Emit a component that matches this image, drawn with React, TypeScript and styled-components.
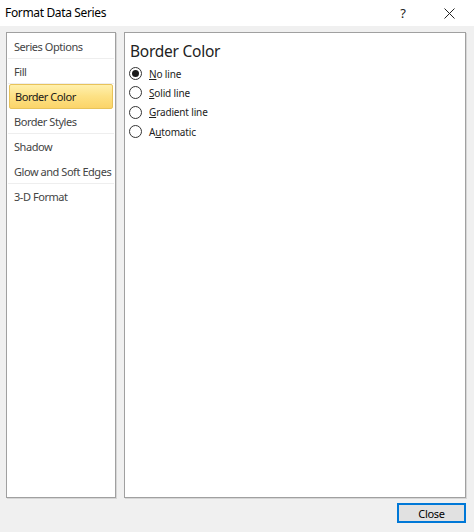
import React from "react";
import styled, { createGlobalStyle } from "styled-components";

const Global = createGlobalStyle`
  html, body { margin: 0; padding: 0; background: #f0f0f0; }
  body { font-family: "Noto Sans", "Open Sans", sans-serif; color: #000; }
`;

const Dialog = styled.div`
  width: 474px;
  height: 532px;
  display: flex;
  flex-direction: column;
  background: #f0f0f0;
  overflow: hidden;
`;

const TitleBar = styled.div`
  height: 26px;
  flex: 0 0 26px;
  background: #ffffff;
  display: flex;
  align-items: center;
  padding-left: 5px;
  box-sizing: border-box;
`;

const Title = styled.div`
  flex: 1;
  font-size: 12px;
  letter-spacing: -0.35px;
  color: #000;
  padding-bottom: 1px;
`;

const TitleButton = styled.div<{ $w: number }>`
  width: ${(p) => p.$w}px;
  height: 26px;
  display: flex;
  align-items: center;
  justify-content: center;
  font-size: 13px;
  color: #222;
`;

const Body = styled.div`
  flex: 1;
  display: flex;
  gap: 8px;
  padding: 6px 8px 0 6px;
  min-height: 0;
`;

const Panel = styled.div<{ $w?: number }>`
  ${(p) => (p.$w ? `width: ${p.$w}px; flex: 0 0 ${p.$w}px;` : "flex: 1;")}
  height: 466px;
  box-sizing: border-box;
  background: #fff;
  border: 1px solid #a0a0a0;
  box-shadow: 1px 1px 0 #d6d6d6;
`;

const Nav = styled(Panel)`
  padding: 1px 1px;
  display: flex;
  flex-direction: column;
`;

const NavItem = styled.div<{ $active?: boolean; $line?: boolean }>`
  height: 25px;
  box-sizing: border-box;
  display: flex;
  align-items: center;
  padding-left: 6px;
  font-size: 11px;
  letter-spacing: -0.45px;
  white-space: nowrap;
  color: ${(p) => (p.$active ? "#1a1a1a" : "#444")};
  border-bottom: 1px solid ${(p) => (p.$line && !p.$active ? "#eeeeee" : "transparent")};
  ${(p) =>
    p.$active &&
    `
    background: linear-gradient(#fff0ad, #fde184 50%, #fbd469);
    border: 1px solid #e8c35a;
    border-radius: 2px;
    padding-left: 5px;
    margin: 0 1px;
  `}
`;

const Content = styled(Panel)`
  padding: 8px 4px;
`;

const Heading = styled.div`
  font-size: 15.5px;
  letter-spacing: -0.25px;
  line-height: 20px;
  padding-left: 1px;
  color: #222;
  margin-bottom: 6px;
`;

const Options = styled.div`
  display: flex;
  flex-direction: column;
  gap: 6.2px;
`;

const Option = styled.label`
  display: flex;
  align-items: center;
  gap: 7px;
  height: 13.2px;
  font-size: 10px;
  letter-spacing: -0.15px;
  color: #222;
`;

const Circle = styled.span<{ $on?: boolean }>`
  width: 13px;
  height: 13px;
  flex: 0 0 13px;
  box-sizing: border-box;
  border-radius: 50%;
  border: 1px solid #333;
  background: #fff;
  display: flex;
  align-items: center;
  justify-content: center;
  &::after {
    content: "";
    width: 7px;
    height: 7px;
    border-radius: 50%;
    background: ${(p) => (p.$on ? "#1a1a1a" : "transparent")};
  }
`;

const Footer = styled.div`
  height: 34px;
  flex: 0 0 34px;
  display: flex;
  justify-content: flex-end;
  align-items: flex-start;
  padding: 5px 8px 0 0;
  box-sizing: border-box;
`;

const Button = styled.button`
  width: 69px;
  height: 20px;
  box-sizing: border-box;
  border: 1px solid #0078d7;
  box-shadow: inset 0 0 0 1px #0078d7;
  background: #e1e1e1;
  font-family: "Noto Sans", sans-serif;
  font-size: 11px;
  letter-spacing: -0.3px;
  color: #000;
  padding: 0;
`;

const items = [
  { t: "Series Options", line: true },
  { t: "Fill", line: true },
  { t: "Border Color", active: true },
  { t: "Border Styles", line: true },
  { t: "Shadow" },
  { t: "Glow and Soft Edges", line: true },
  { t: "3-D Format" },
];

const opts: { k: string; rest: string; pre?: string; on?: boolean }[] = [
  { k: "N", rest: "o line", on: true },
  { k: "S", rest: "olid line" },
  { k: "G", rest: "radient line" },
  { pre: "A", k: "u", rest: "tomatic" },
];

export default function App() {
  return (
    <Dialog>
      <Global />
      <TitleBar>
        <Title>Format Data Series</Title>
        <TitleButton $w={30}>?</TitleButton>
        <TitleButton $w={6} />
        <TitleButton $w={50}>
          <svg width="11" height="11" viewBox="0 0 11 11">
            <path d="M0.5 0.5 L10.5 10.5 M10.5 0.5 L0.5 10.5" stroke="#222" strokeWidth="1" fill="none" />
          </svg>
        </TitleButton>
      </TitleBar>
      <Body>
        <Nav $w={110}>
          {items.map((i) => (
            <NavItem key={i.t} $active={i.active} $line={i.line}>
              {i.t}
            </NavItem>
          ))}
        </Nav>
        <Content>
          <Heading>Border Color</Heading>
          <Options>
            {opts.map((o) => (
              <Option key={o.rest}>
                <Circle $on={o.on} />
                <span>
                  {o.pre}
                  <u>{o.k}</u>
                  {o.rest}
                </span>
              </Option>
            ))}
          </Options>
        </Content>
      </Body>
      <Footer>
        <Button>Close</Button>
      </Footer>
    </Dialog>
  );
}
